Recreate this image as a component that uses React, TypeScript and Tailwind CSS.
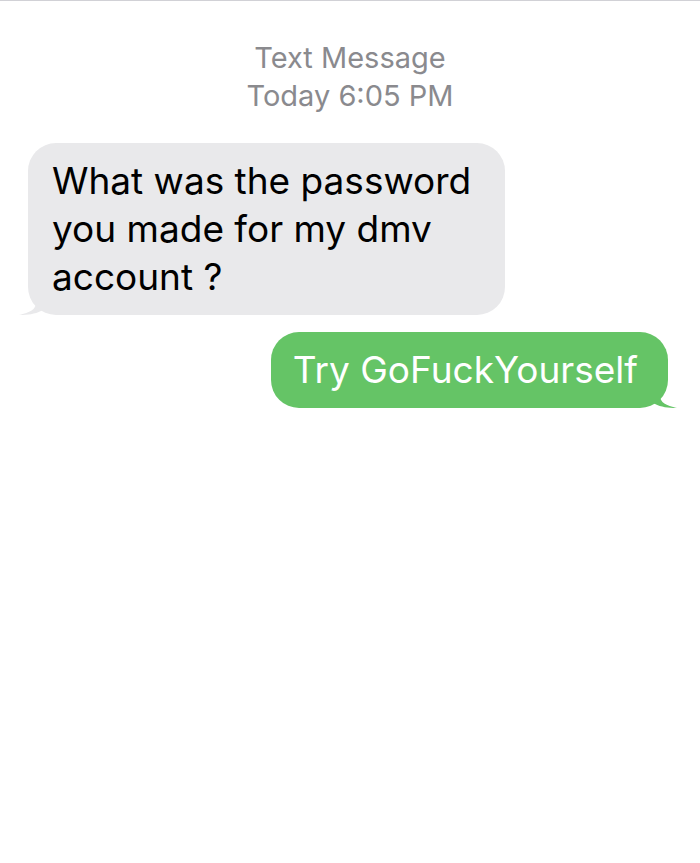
import React from "react";

type Msg = { from: "them" | "me"; lines: string[] };

const messages: Msg[] = [
  { from: "them", lines: ["What was the password", "you made for my dmv", "account ?"] },
  { from: "me", lines: ["Try GoFuckYourself"] },
];

// little curled tail under the bottom corner of a bubble
function Tail({ color, side }: { color: string; side: "left" | "right" }) {
  return (
    <svg
      width="40"
      height="31"
      viewBox="0 0 40 31"
      className={`absolute bottom-0 ${side === "left" ? "-left-[12px]" : "-right-[12px] -scale-x-100"}`}
    >
      <path
        d="M20 0 L20 19 C20 25 14 29 3 30.8 C12 31.5 21 29.5 27 26 C31 29 35 30 40 30 L40 0 Z"
        fill={color}
      />
    </svg>
  );
}

const Bubble = ({ msg }: { msg: Msg }) => {
  const mine = msg.from === "me";
  const color = mine ? "#65c466" : "#e9e9eb";
  return (
    <div className={`flex ${mine ? "justify-end pr-[32px]" : "justify-start pl-[28px]"}`}>
      <div
        className={`relative rounded-[28px] ${
          mine
            ? "bg-[#65c466] text-white pl-[22px] pr-[30px] py-[14px]"
            : "bg-[#e9e9eb] text-black pl-[24px] py-[14px] w-[477px]"
        }`}
      >
        <Tail color={color} side={mine ? "right" : "left"} />
        <p className="relative text-[37px] leading-[48px] whitespace-nowrap">
          {msg.lines.map((l, i) => (
            <span key={i} className="block">
              {l}
            </span>
          ))}
        </p>
      </div>
    </div>
  );
};

export default function App() {
  return (
    <div
      className="min-h-[863px] bg-white border-t border-[#d1d1d6]"
      style={{ fontFamily: "Inter, 'Liberation Sans', sans-serif" }}
    >
      <div className="pt-[38px] text-center text-[29px] leading-[38px] text-[#8a8a8e]">
        <div>Text Message</div>
        <div>Today 6:05 PM</div>
      </div>

      <div className="mt-[28px] flex flex-col gap-[17px]">
        {messages.map((m, i) => (
          <Bubble key={i} msg={m} />
        ))}
      </div>
    </div>
  );
}
